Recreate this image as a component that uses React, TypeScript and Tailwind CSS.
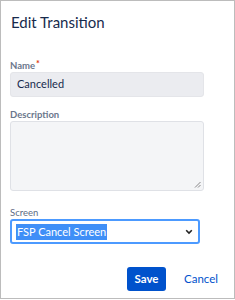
import React from "react";

export default function App() {
  const font = { fontFamily: 'Lato, "Noto Sans", sans-serif' };
  return (
    <div
      className="w-[235px] h-[299px] border border-[#bcbcbc] bg-white box-border flex flex-col pl-[9px]"
      style={font}
    >
      <div className="mt-[10px] h-[22px] pl-[1px] text-[15px] leading-[22px] text-[#172b4d]">Edit Transition</div>

      <div className="mt-[27px] h-[11px] flex items-start text-[9.5px] leading-[11px] font-bold text-[#6b778c]">
        Name<span className="text-[#de350b] text-[9px] leading-[8px] ml-[1px]">*</span>
      </div>
      <div className="mt-[1px] h-[25px] w-[194px] rounded-[3px] bg-[#ebecf0] border border-[#e4e5e9] flex items-center pl-[6px] text-[11px] text-[#172b4d]">
        Cancelled
      </div>

      <div className="mt-[12px] h-[11px] text-[9.5px] leading-[11px] font-bold text-[#6b778c]">Description</div>
      <div className="mt-[1px] relative h-[70px] w-[194px] rounded-[3px] bg-[#f4f5f7] border border-[#dfe1e6]">
        <svg className="absolute right-[2px] bottom-[2px]" width="7" height="7" viewBox="0 0 7 7">
          <path d="M6.5 1 L1 6.5 M6.5 4 L4 6.5" stroke="#7a7a7a" strokeWidth="0.9" />
        </svg>
      </div>

      <div className="mt-[17px] h-[10px] text-[9.5px] leading-[10px] text-[#5e6c84]">Screen</div>
      <div className="mt-[1px] h-[25px] w-[190px] rounded-[3px] border-2 border-[#4c9aff] flex items-center pl-[4px] pr-[5px] text-[11px]">
        <span className="bg-[#3f8ff7] text-white leading-[16px] px-[1px]">FSP Cancel Screen</span>
        <svg className="ml-auto" width="8" height="6" viewBox="0 0 8 6">
          <path d="M1.2 1.2 L4 4 L6.8 1.2" stroke="#222" strokeWidth="1.6" fill="none" />
        </svg>
      </div>

      <div className="mt-[23px] flex items-center">
        <div className="ml-[117px] h-[24px] w-[39px] shrink-0 rounded-[3px] bg-[#0052cc] text-white text-[11.5px] font-bold flex items-center justify-center">
          Save
        </div>
        <div className="ml-[18px] text-[11.5px] text-[#0052cc]">Cancel</div>
      </div>
    </div>
  );
}
